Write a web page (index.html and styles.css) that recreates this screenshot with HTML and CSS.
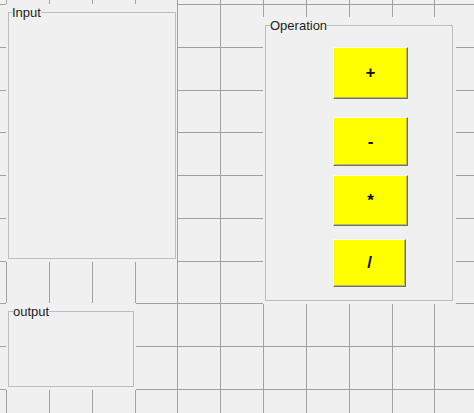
FILE: index.html
```html
<!DOCTYPE html>
<html lang="en">
<head>
<meta charset="utf-8">
<title>Calculator</title>
<link rel="stylesheet" href="styles.css">
</head>
<body>
<div class="canvas">
  <svg class="grid" width="474" height="413" viewBox="0 0 474 413" aria-hidden="true">
    <g stroke="#a2a2a2" stroke-width="1" shape-rendering="crispEdges">
      <line x1="6.5" y1="0" x2="6.5" y2="413"/>
      <line x1="49.5" y1="0" x2="49.5" y2="413"/>
      <line x1="92.5" y1="0" x2="92.5" y2="413"/>
      <line x1="135.5" y1="0" x2="135.5" y2="413"/>
      <line x1="177.5" y1="0" x2="177.5" y2="413"/>
      <line x1="220.5" y1="0" x2="220.5" y2="413"/>
      <line x1="263.5" y1="0" x2="263.5" y2="413"/>
      <line x1="306.5" y1="0" x2="306.5" y2="413"/>
      <line x1="349.5" y1="0" x2="349.5" y2="413"/>
      <line x1="392.5" y1="0" x2="392.5" y2="413"/>
      <line x1="434.5" y1="0" x2="434.5" y2="413"/>
      <line x1="0" y1="4.5" x2="474" y2="4.5"/>
      <line x1="0" y1="47.5" x2="474" y2="47.5"/>
      <line x1="0" y1="90.5" x2="474" y2="90.5"/>
      <line x1="0" y1="132.5" x2="474" y2="132.5"/>
      <line x1="0" y1="175.5" x2="474" y2="175.5"/>
      <line x1="0" y1="218.5" x2="474" y2="218.5"/>
      <line x1="0" y1="261.5" x2="474" y2="261.5"/>
      <line x1="0" y1="303.5" x2="474" y2="303.5"/>
      <line x1="0" y1="346.5" x2="474" y2="346.5"/>
      <line x1="0" y1="389.5" x2="474" y2="389.5"/>
    </g>
  </svg>

  <div class="cover input-cover">
    <fieldset class="group input-group">
      <legend>Input</legend>
    </fieldset>
  </div>

  <div class="cover op-cover">
    <fieldset class="group op-group">
      <legend>Operation</legend>
      <div class="buttons">
        <button class="op-btn btn-plus" type="button">+</button>
        <button class="op-btn btn-minus" type="button">-</button>
        <button class="op-btn btn-mul" type="button">*</button>
        <button class="op-btn btn-div" type="button">/</button>
      </div>
    </fieldset>
  </div>

  <div class="cover output-cover">
    <fieldset class="group output-group">
      <legend>output</legend>
    </fieldset>
  </div>
</div>
</body>
</html>
```

FILE: styles.css
```css
html, body {
  margin: 0;
  padding: 0;
  background: #f0f0f0;
}

.canvas {
  width: 474px;
  height: 413px;
  overflow: hidden;
  display: grid;
  grid-template-columns: 6px 130px 41px 86px 193px 18px;
  grid-template-rows: 4px 13px 245px 41px 1px 86px 23px;
  font-family: "Liberation Sans", Arial, sans-serif;
}

.grid {
  grid-column: 1 / -1;
  grid-row: 1 / -1;
  display: block;
}

.cover {
  background: #f0f0f0;
  z-index: 1;
  display: flex;
  flex-direction: column;
}

.input-cover {
  grid-column: 2 / 4;
  grid-row: 2 / 4;
}

.op-cover {
  grid-column: 5 / 6;
  grid-row: 3 / 6;
}

.output-cover {
  grid-column: 2 / 3;
  grid-row: 5 / 7;
}

.group {
  flex: 1;
  min-width: 0;
  min-height: 0;
  padding: 0;
  border: 1px solid #bdbdbd;
}

.group legend {
  padding: 0;
  margin-left: 4px;
  font-size: 13px;
  line-height: 15px;
  color: #1c1c1c;
}

.input-group {
  margin: 1px 1px 3px 2px;
}

.input-group legend {
  margin-left: 3px;
}

.op-group {
  margin: 1px 3px 3px 2px;
}

.output-group {
  margin: 1px 2px 3px 2px;
}

.buttons {
  display: flex;
  flex-direction: column;
  align-items: flex-start;
  padding-left: 67px;
}

.op-btn {
  box-sizing: border-box;
  width: 75px;
  padding: 0;
  margin: 0;
  background: #ffff00;
  color: #111;
  font-family: "Liberation Sans", Arial, sans-serif;
  font-weight: bold;
  font-size: 17px;
  border: 1px solid;
  border-color: #fbfbe6 #6e6e6e #6e6e6e #fbfbe6;
  box-shadow: inset -1px -1px 0 #b9b95a;
  border-radius: 0;
}

.btn-plus {
  margin-top: 14px;
  height: 52px;
}

.btn-minus {
  margin-top: 18px;
  height: 49px;
}

.btn-mul {
  margin-top: 9px;
  height: 51px;
}

.btn-div {
  margin-top: 13px;
  height: 48px;
  width: 73px;
}
```
